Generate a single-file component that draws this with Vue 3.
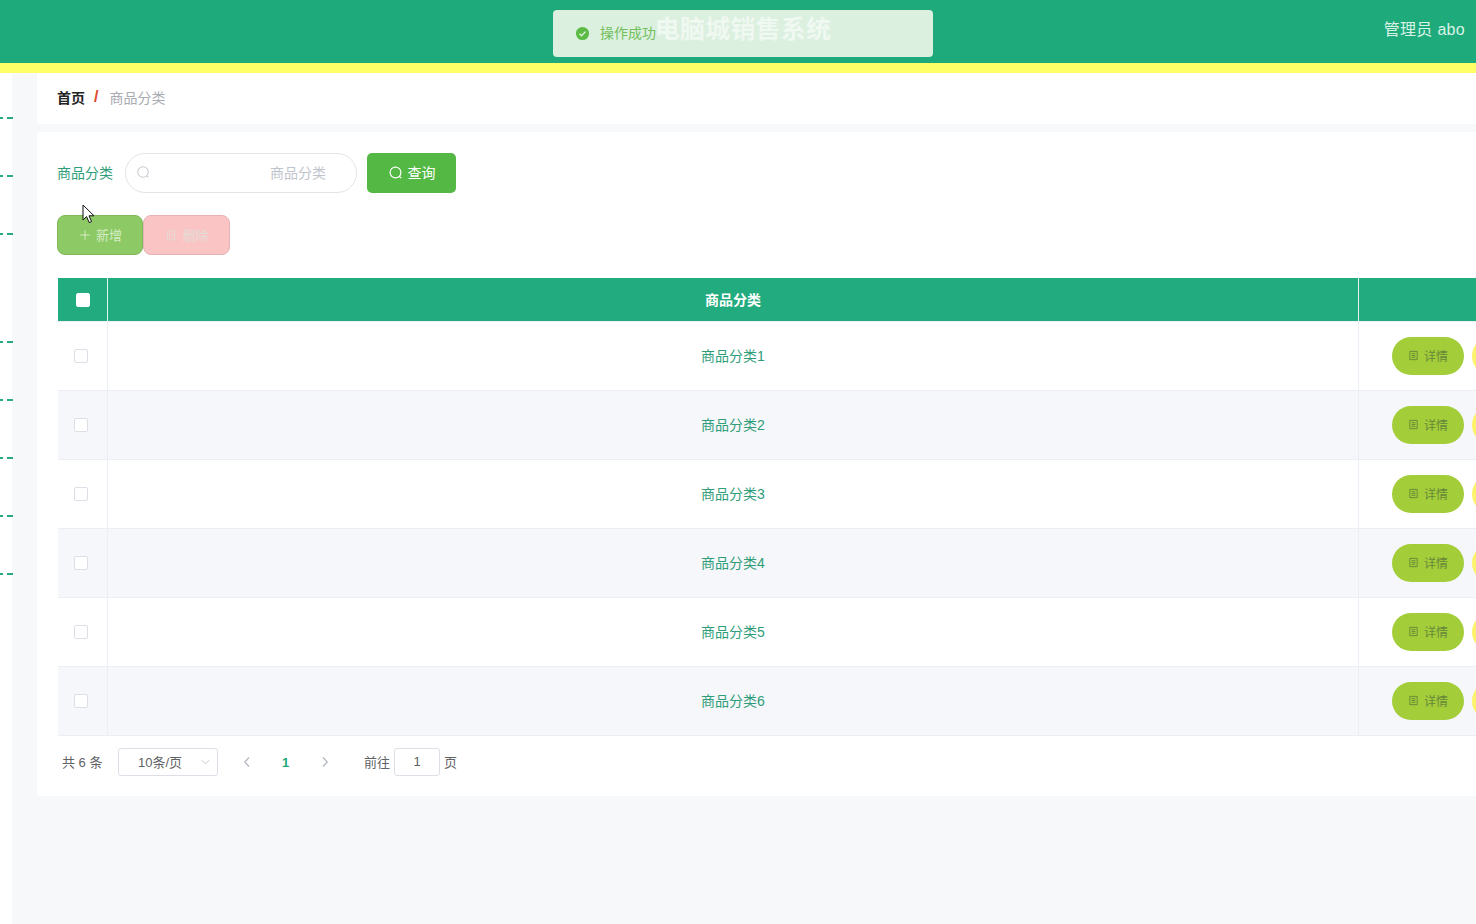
<template>
  <div class="page">
    <header class="topbar">
      <div class="title">电脑城销售系统</div>
      <div class="user">管理员 abo</div>
    </header>

    <div class="toast">
      <svg class="toast-icon" viewBox="0 0 16 16">
        <circle cx="8" cy="8" r="7" fill="#5dbb45" />
        <path d="M4.8 8.2l2.2 2.2 4.2-4.4" fill="none" stroke="#dcf0e0" stroke-width="1.5" />
      </svg>
      <span>操作成功</span>
    </div>

    <div class="body">
      <aside class="side">
        <div v-for="(n, i) in menus" :key="i" class="side-item" :class="{ gap: n }">
          <span class="dash"></span>
        </div>
      </aside>

      <main class="main">
        <div class="crumb">
          <span class="crumb-home">首页</span>
          <span class="crumb-sep">/</span>
          <span class="crumb-cur">商品分类</span>
        </div>

        <section class="card">
          <div class="search">
            <label class="search-label">商品分类</label>
            <div class="search-input">
              <svg class="search-icon" viewBox="0 0 16 16">
                <circle cx="7.5" cy="7.5" r="5.6" fill="none" stroke="#c6c9cf" stroke-width="1.1" />
                <path d="M11.6 11.6l1.6 1.6" stroke="#c6c9cf" stroke-width="1.1" />
              </svg>
              <span class="placeholder">商品分类</span>
            </div>
            <button class="btn btn-query">
              <svg class="btn-icon" viewBox="0 0 16 16">
                <circle cx="7.5" cy="7.5" r="5.4" fill="none" stroke="#fff" stroke-width="1.2" />
                <path d="M11.5 11.5l1.7 1.7" stroke="#fff" stroke-width="1.2" />
              </svg>
              查询
            </button>
          </div>

          <div class="actions">
            <button class="btn btn-add">
              <svg class="btn-icon" viewBox="0 0 16 16">
                <path d="M8 2.5v11M2.5 8h11" stroke="#d6ecc6" stroke-width="1.1" />
              </svg>
              新增
            </button>
            <button class="btn btn-del">
              <svg class="btn-icon" viewBox="0 0 16 16">
                <path d="M4 3.5h8v10H4zM6.5 5.5v6M9.5 5.5v6" fill="none" stroke="#e3dcd6" stroke-width="1" />
              </svg>
              删除
            </button>
          </div>

          <div class="table">
            <div class="thead">
              <div class="cell cell-check"><span class="check check-head"></span></div>
              <div class="cell"><span class="cell-text">商品分类</span></div>
              <div class="cell cell-last"></div>
            </div>
            <div v-for="(row, i) in rows" :key="row" class="row" :class="{ striped: i % 2 === 1 }">
              <div class="cell cell-check"><span class="check"></span></div>
              <div class="cell"><span class="cell-text">{{ row }}</span></div>
              <div class="cell cell-ops">
                <button class="op op-detail">
                  <svg class="op-icon" viewBox="0 0 12 12">
                    <path d="M2 1.5h8v9H2zM4 4h4M4 6h4M4 8h4" fill="none" stroke="#66883a" stroke-width="1" />
                  </svg>
                  详情
                </button>
                <button class="op op-edit"></button>
              </div>
            </div>
          </div>

          <div class="pager">
            <span class="total">共 6 条</span>
            <div class="size">
              <span class="size-text">10条/页</span>
              <svg class="size-arrow" viewBox="0 0 10 6">
                <path d="M1 1l4 4 4-4" fill="none" stroke="#c0c4cc" stroke-width="1" />
              </svg>
            </div>
            <svg class="arrow" viewBox="0 0 8 12">
              <path d="M6 1.5L1.8 6 6 10.5" fill="none" stroke="#b4b8bf" stroke-width="1.3" />
            </svg>
            <span class="page-num">1</span>
            <svg class="arrow arrow-next" viewBox="0 0 8 12">
              <path d="M2 1.5L6.2 6 2 10.5" fill="none" stroke="#b4b8bf" stroke-width="1.3" />
            </svg>
            <span class="jump">前往</span>
            <div class="jump-input">1</div>
            <span class="jump-unit">页</span>
          </div>
        </section>
      </main>
    </div>

    <svg class="cursor" viewBox="0 0 13 20">
      <path d="M1 1v15l3.6-3.4 2.6 6 2.4-1-2.6-5.8h5z" fill="#fff" stroke="#111" stroke-width="1" />
    </svg>
  </div>
</template>

<script setup>
// true = extra space above that menu entry
const menus = [false, false, false, true, false, false, false, false];
const rows = [1, 2, 3, 4, 5, 6].map((n) => `商品分类${n}`);
</script>

<style>
html, body {
  margin: 0;
  background: #f7f8fa;
}
</style>

<style scoped>
.page {
  position: relative;
  width: 1476px;
  height: 924px;
  overflow: hidden;
  background: #f7f8fa;
  font-family: "Liberation Sans", "Noto Sans CJK SC", sans-serif;
  font-size: 14px;
}

.topbar {
  box-sizing: border-box;
  height: 73px;
  background: #1eaa7b;
  border-bottom: 10px solid #ffff66;
  display: flex;
  align-items: center;
  justify-content: center;
  position: relative;
}
.title {
  color: #fff;
  font-size: 25px;
  font-weight: 700;
  letter-spacing: 0.2px;
  position: relative;
  z-index: 3;
  opacity: 0.55;
  margin: -9px 0 0 10px;
}
.user {
  position: absolute;
  right: 11px;
  top: 19px;
  color: #d8f3e6;
  font-size: 16px;
  letter-spacing: 0.3px;
  line-height: 22px;
}

.toast {
  position: absolute;
  left: 553px;
  top: 10px;
  z-index: 2;
  box-sizing: border-box;
  width: 380px;
  height: 47px;
  display: flex;
  align-items: center;
  gap: 10px;
  padding-left: 22px;
  background: #dcf0e0;
  border-radius: 4px;
  color: #72bf5c;
  font-size: 14px;
}
.toast span {
  margin-bottom: 4px;
}
.toast-icon {
  width: 15px;
  height: 15px;
}

.body {
  display: flex;
}
.side {
  width: 12px;
  height: 851px;
  flex: none;
  background: #fff;
  padding-top: 15px;
  box-sizing: border-box;
}
.side-item {
  height: 58px;
  position: relative;
}
.side-item.gap {
  margin-top: 50px;
}
.dash {
  position: absolute;
  left: 0;
  top: 29px;
  width: 13px;
  height: 2px;
  background: linear-gradient(to right, #2aa985 3px, transparent 3px, transparent 7px, #2aa985 7px);
}

.main {
  margin-left: 25px;
  width: 1600px;
  flex: none;
}
.crumb {
  box-sizing: border-box;
  height: 51px;
  background: #fff;
  display: flex;
  align-items: center;
  padding: 0 0 4px 20px;
  font-size: 14px;
}
.crumb-home {
  color: #222;
  font-weight: 700;
}
.crumb-sep {
  color: #e0492c;
  font-size: 16px;
  font-weight: 700;
  margin: 0 11px 0 9px;
}
.crumb-cur {
  color: #a8abb2;
}

.card {
  margin-top: 8px;
  height: 664px;
  box-sizing: border-box;
  background: #fff;
  padding: 21px 0 0 20px;
}
.search {
  display: flex;
  align-items: center;
  height: 40px;
}
.search-label {
  color: #2f9d79;
  font-size: 14px;
  width: 68px;
  margin-bottom: 2px;
}
.search-input {
  box-sizing: border-box;
  width: 232px;
  height: 40px;
  border: 1px solid #e2e4e8;
  border-radius: 20px;
  display: flex;
  align-items: center;
  padding-left: 10px;
}
.search-icon {
  width: 15px;
  height: 15px;
  margin-top: -2px;
}
.placeholder {
  color: #c0c4cc;
  font-size: 14px;
  margin: 0 0 2px 119px;
}
.btn {
  box-sizing: border-box;
  height: 40px;
  border-radius: 5px;
  display: flex;
  align-items: center;
  justify-content: center;
  gap: 4px;
  padding: 0 0 2px;
  font-family: inherit;
  font-size: 13px;
  border: 1px solid transparent;
}
.btn-icon {
  width: 14px;
  height: 14px;
  margin-top: 2px;
}
.btn-query {
  width: 89px;
  margin-left: 10px;
  background: #54b944;
  color: #fff;
  font-size: 14px;
}
.btn-query .btn-icon {
  width: 16px;
  height: 16px;
}
.actions {
  display: flex;
  margin-top: 22px;
}
.btn-add {
  width: 86px;
  background: #8dca65;
  border-color: #7fb95a;
  color: #d6ecc6;
  border-radius: 8px;
}
.btn-del {
  width: 87px;
  background: #fbc4c4;
  border-color: #e5b3b3;
  color: #e3dcd6;
  border-radius: 8px;
}

.table {
  margin: 23px 0 0 1px;
  font-size: 14px;
  border-bottom: 1px solid #ebeef5;
}
.thead,
.row {
  display: grid;
  grid-template-columns: 50px 1251px 1fr;
  text-align: center;
}
.thead {
  height: 43px;
  background: #22ab7e;
  color: #fff;
  font-weight: 700;
}
.row {
  height: 69px;
  color: #2f9d79;
  box-sizing: border-box;
  border-top: 1px solid #ebeef5;
}
.row.striped {
  background: #f5f7fa;
}
.cell {
  display: flex;
  align-items: center;
  justify-content: center;
  box-sizing: border-box;
  border-right: 1px solid #ebeef5;
}
.cell-text {
  margin-bottom: 2px;
}
.thead .cell {
  border-right-color: #e6f5ef;
}
.cell-last,
.cell-ops {
  border-right: 0;
}
.cell-check {
  padding-right: 4px;
}
.thead .cell-check {
  padding-right: 0;
}
.check {
  box-sizing: border-box;
  width: 14px;
  height: 14px;
  border: 1px solid #dcdfe6;
  border-radius: 2px;
  background: #fff;
}
.check-head {
  border-color: #fff;
}
.cell-ops {
  justify-content: flex-start;
  padding-left: 33px;
  gap: 8px;
}
.op {
  box-sizing: border-box;
  height: 38px;
  width: 72px;
  border: 0;
  border-radius: 19px;
  flex: none;
  display: flex;
  align-items: center;
  justify-content: center;
  gap: 5px;
  padding: 0 0 2px;
  font-family: inherit;
  font-size: 12px;
}
.op-icon {
  width: 11px;
  height: 11px;
}
.op-detail {
  background: #a3cd39;
  color: #66883a;
}
.op-edit {
  background: #fdf36a;
}

.pager {
  display: flex;
  align-items: center;
  height: 30px;
  margin-top: 11px;
  color: #606266;
  font-size: 13px;
}
.total {
  margin: 0 0 2px 5px;
  width: 56px;
}
.size {
  box-sizing: border-box;
  width: 100px;
  height: 28px;
  border: 1px solid #dcdfe6;
  border-radius: 3px;
  display: flex;
  align-items: center;
  padding: 0 7px 0 19px;
  justify-content: space-between;
}
.size-text {
  margin-bottom: 2px;
}
.size-arrow {
  width: 9px;
  height: 6px;
}
.arrow {
  width: 8px;
  height: 12px;
  margin-left: 25px;
}
.page-num {
  color: #1eaa7b;
  font-weight: 700;
  margin-left: 31px;
  width: 8px;
}
.arrow-next {
  margin-left: 31px;
}
.jump {
  margin: 0 0 2px 35px;
}
.jump-input {
  box-sizing: border-box;
  width: 46px;
  height: 28px;
  margin-left: 4px;
  border: 1px solid #dcdfe6;
  border-radius: 3px;
  text-align: center;
  line-height: 26px;
}
.jump-unit {
  margin: 0 0 2px 4px;
}

.cursor {
  position: absolute;
  left: 82px;
  top: 204px;
  width: 13px;
  height: 20px;
  z-index: 5;
}
</style>
